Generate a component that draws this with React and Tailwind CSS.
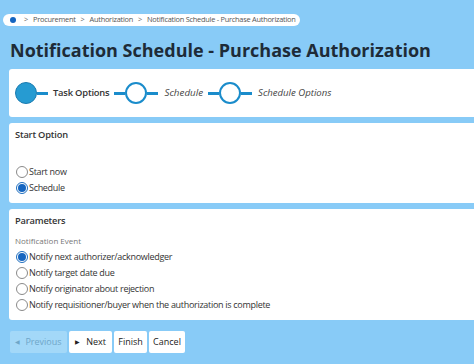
import React from "react";

function Radio({ checked, label }) {
  return (
    <div className="flex items-center h-[16px]">
      <span
        className={
          "w-[12px] h-[12px] rounded-full border flex items-center justify-center shrink-0 " +
          (checked ? "border-[#1f6fbf] bg-white" : "border-[#8a8a8a] bg-white")
        }
      >
        {checked && <span className="w-[8px] h-[8px] rounded-full bg-[#1565c0]" />}
      </span>
      <span className="ml-[1px] text-[9px] tracking-[-0.3px] text-[#333] whitespace-nowrap">{label}</span>
    </div>
  );
}

function Line() {
  return <span className="w-[11px] h-[3px] bg-[#1a8ccb] shrink-0" />;
}

export default function App() {
  return (
    <div
      className="w-[474px] h-[364px] bg-[#88cbf7] overflow-hidden"
      style={{ fontFamily: '"Open Sans", "Noto Sans", sans-serif' }}
    >
      <div className="pt-[14px] pl-[3px]">
        <div className="w-[297px] h-[12px] bg-white rounded-full flex items-center pl-[7px] text-[7.4px] tracking-[-0.25px] text-[#555] whitespace-nowrap">
          <span className="w-[6px] h-[6px] rounded-full bg-[#1565c0] shrink-0" />
          <span className="ml-[8px] mr-[5px] text-[#666]">&gt;</span>
          <span>Procurement</span>
          <span className="mx-[5px] text-[#666]">&gt;</span>
          <span>Authorization</span>
          <span className="mx-[5px] text-[#666]">&gt;</span>
          <span>Notification Schedule - Purchase Authorization</span>
        </div>
      </div>
      <div className="pl-[10px] mt-[12px] h-[31px] text-[18px] font-bold text-[#1e2b38] leading-[24px] whitespace-nowrap">
        Notification Schedule - Purchase Authorization
      </div>
      <div className="ml-[9px] flex flex-col gap-[6px]">
        <div className="h-[48px] bg-white rounded-l-[3px] flex items-center pl-[6px]">
          <span className="w-[22px] h-[22px] rounded-full bg-[#269bd2] border border-[#1b7bb0] shrink-0" />
          <Line />
          <span className="ml-[5px] mr-[5px] text-[9.4px] tracking-[-0.2px] font-semibold text-[#333]">Task Options</span>
          <Line />
          <span className="w-[22px] h-[22px] rounded-full bg-white border-2 border-[#1a8ccb] shrink-0" />
          <Line />
          <span className="ml-[6px] mr-[5px] text-[9.8px] italic text-[#444]">Schedule</span>
          <Line />
          <span className="w-[22px] h-[22px] rounded-full bg-white border-2 border-[#1a8ccb] shrink-0" />
          <Line />
          <span className="ml-[6px] text-[9.6px] italic text-[#444]">Schedule Options</span>
        </div>
        <div className="h-[80px] bg-white rounded-l-[3px] pl-[6px] pt-[5px]">
          <div className="text-[9.3px] tracking-[-0.2px] font-semibold text-[#333] leading-[14px]">Start Option</div>
          <div className="mt-[22px] pl-[1px] flex flex-col">
            <Radio label="Start now" />
            <Radio checked label="Schedule" />
          </div>
        </div>
        <div className="h-[111px] bg-white rounded-l-[3px] pl-[6px] pt-[5px]">
          <div className="text-[9.3px] tracking-[-0.2px] font-semibold text-[#333] leading-[14px]">Parameters</div>
          <div className="mt-[7px] text-[8px] text-[#777] leading-[11px]">Notification Event</div>
          <div className="mt-[3px] pl-[1px] flex flex-col">
            <Radio checked label="Notify next authorizer/acknowledger" />
            <Radio label="Notify target date due" />
            <Radio label="Notify originator about rejection" />
            <Radio label="Notify requisitioner/buyer when the authorization is complete" />
          </div>
        </div>
      </div>
      <div className="ml-[10px] mt-[11px] flex gap-[2px] text-[9px]">
        <div className="w-[57px] h-[22px] bg-[#a3d8f8] rounded-[2px] flex items-center justify-center text-[#6fa6c8]">
          <span className="text-[6px] mr-[5px]">&#9664;</span>Previous
        </div>
        <div className="w-[43px] h-[22px] bg-white rounded-[2px] flex items-center justify-center text-[#222]">
          <span className="text-[6px] mr-[6px]">&#9654;</span>Next
        </div>
        <div className="w-[33px] h-[22px] bg-white rounded-[2px] flex items-center justify-center text-[#222]">Finish</div>
        <div className="w-[36px] h-[22px] bg-white rounded-[2px] flex items-center justify-center text-[#222]">Cancel</div>
      </div>
    </div>
  );
}
